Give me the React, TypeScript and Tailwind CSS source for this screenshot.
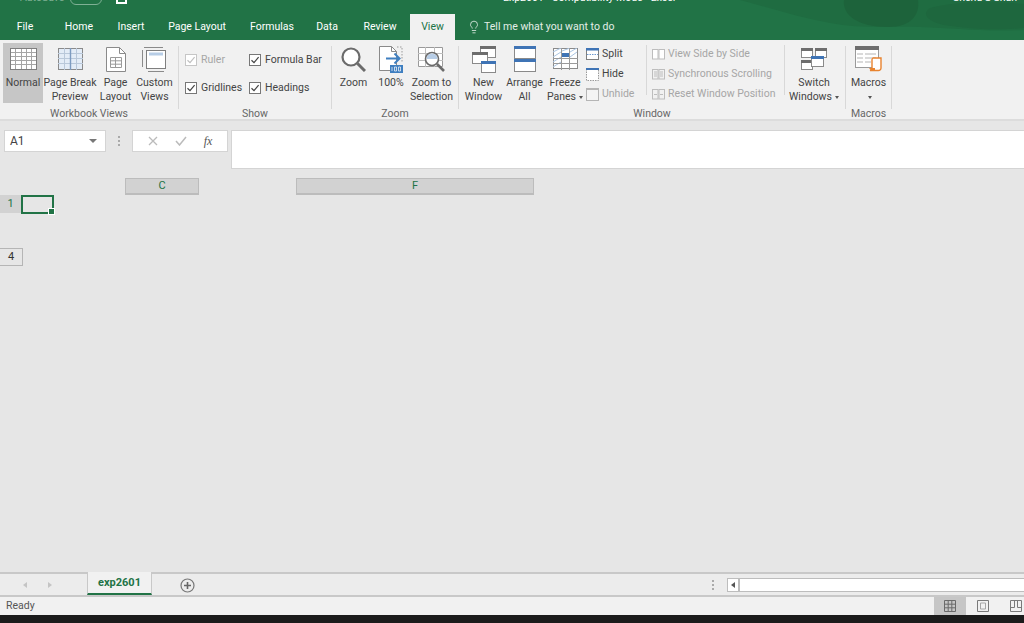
import { Lightbulb } from 'lucide-react';

const tabs = [
  { name: 'File', w: 'w-[50px]' },
  { name: 'Home', w: 'w-[58px]' },
  { name: 'Insert', w: 'w-[46px]' },
  { name: 'Page Layout', w: 'w-[86px]' },
  { name: 'Formulas', w: 'w-[64px]' },
  { name: 'Data', w: 'w-[46px]' },
  { name: 'Review', w: 'w-[60px]' },
];

function Sep() {
  return <div className="w-px h-[63px] mt-[3px] bg-[#d8d8d8] shrink-0" />;
}

function NormalIcon() {
  return (
    <svg width="27" height="22" viewBox="0 0 27 22" fill="none">
      <rect x="0.5" y="0.5" width="26" height="21" fill="#fff" />
      <path d="M0 4.5h27M0 8.5h27M0 12.5h27M0 16.5h27M5.5 0v22M11.5 0v22M16.5 0v22M21.5 0v22" stroke="#a5a5a5" />
      <rect x="0.5" y="0.5" width="26" height="21" stroke="#7f7f7f" />
    </svg>
  );
}

function PageBreakIcon() {
  return (
    <svg width="25" height="22" viewBox="0 0 25 22" fill="none">
      <rect x="0.5" y="0.5" width="24" height="21" fill="#e3ecf7" stroke="#8a8a8a" />
      <path d="M0 5.5h25M0 10.5h25M0 15.5h25M6.5 0v22M18.5 0v22" stroke="#b9c8da" />
      <path d="M12.5 0v22" stroke="#7d9bc0" strokeWidth="1.4" />
    </svg>
  );
}

function PageLayoutIcon() {
  return (
    <svg width="20" height="25" viewBox="0 0 20 25" fill="none">
      <path d="M.5.5h13l6 6v18H.5z" fill="#fff" stroke="#8a8a8a" />
      <path d="M13.5.5v6h6" stroke="#8a8a8a" />
      <path d="M4.5 10.5h11v10h-11zM4.5 13.8h11M4.5 17.2h11M9.5 10.5v10" stroke="#9a9a9a" />
    </svg>
  );
}

function CustomViewsIcon() {
  return (
    <svg width="25" height="25" viewBox="0 0 25 25" fill="none">
      <path d="M2 .5h19M.5 3v17M6 24.5h16" stroke="#8a8a8a" />
      <rect x="4.5" y="3.5" width="19" height="18" fill="#fff" stroke="#7f7f7f" />
      <rect x="7" y="5.5" width="14" height="3" fill="#b7cde6" />
    </svg>
  );
}

function ZoomIcon() {
  return (
    <svg width="25" height="25" viewBox="0 0 25 25" fill="none">
      <circle cx="10" cy="10" r="8.5" fill="#fff" stroke="#6b6b6b" strokeWidth="2.2" />
      <path d="M16.5 16.5 24 24" stroke="#6b6b6b" strokeWidth="3" />
    </svg>
  );
}

function HundredIcon() {
  return (
    <svg width="24" height="27" viewBox="0 0 24 27" fill="none">
      <path d="M.5.5h12l5 5v19H.5z" fill="#fff" stroke="#8a8a8a" />
      <path d="M12.5.5v5h5" stroke="#8a8a8a" />
      <path d="M18 1h5v15" stroke="#9a9a9a" strokeDasharray="1.5 1.5" />
      <path d="M7 12.5h13M15.5 7.5l5 5-5 5" stroke="#3f7fc0" strokeWidth="2" />
      <rect x="11" y="19" width="13" height="8" fill="#3f7fc0" />
      <path d="M13 21v4M15.5 21h2v4h-2zM19.5 21h2v4h-2z" stroke="#fff" strokeWidth=".7" />
    </svg>
  );
}

function ZoomSelectionIcon() {
  return (
    <svg width="27" height="25" viewBox="0 0 27 25" fill="none">
      <path d="M.5.5h24v19H.5z" fill="#fff" stroke="#9a9a9a" />
      <path d="M0 6.5h25M0 13.5h25M7.5 0v20M16.5 0v20" stroke="#bdbdbd" />
      <circle cx="14" cy="12" r="6.5" fill="#fff" stroke="#6b6b6b" strokeWidth="1.6" />
      <path d="M8.5 12a5.5 5.5 0 0 1 11 0z" fill="#b7cde6" />
      <path d="M19 17l7 7" stroke="#6b6b6b" strokeWidth="2.6" />
    </svg>
  );
}

function Win({ x, y, w, h, blue }: { x: number; y: number; w: number; h: number; blue?: boolean }) {
  return (
    <g>
      <rect x={x + 0.5} y={y + 0.5} width={w} height={h} fill="#fff" stroke="#8a8a8a" />
      <rect x={x} y={y} width={w + 1} height={3} fill={blue ? '#3f74b5' : '#6d6d6d'} />
    </g>
  );
}

function NewWindowIcon() {
  return (
    <svg width="24" height="27" viewBox="0 0 24 27" fill="none">
      <Win x={8} y={0} w={15} h={11} />
      <Win x={0} y={6} w={15} h={11} />
      <Win x={9} y={15} w={14} h={11} blue />
    </svg>
  );
}

function ArrangeIcon() {
  return (
    <svg width="22" height="26" viewBox="0 0 22 26" fill="none">
      <Win x={0} y={0} w={21} h={12} blue />
      <Win x={0} y={13} w={21} h={12} blue />
    </svg>
  );
}

function FreezeIcon() {
  return (
    <svg width="25" height="23" viewBox="0 0 25 23" fill="none">
      <rect x="0.5" y="0.5" width="24" height="20" fill="#fff" stroke="#8a8a8a" />
      <path d="M0 4l8-4M0 9l8-5M0 14l8-5M0 19l8-5M17 4l7-4M17 9l7-5M9 3l8-3" stroke="#a9c4e2" />
      <rect x="9" y="5" width="7" height="4" fill="#3f74b5" />
      <path d="M8.5 0v22M16.5 0v22M0 10.5h25M0 15.5h25" stroke="#9a9a9a" />
    </svg>
  );
}

function SplitIcon() {
  return (
    <svg width="13" height="13" viewBox="0 0 13 13" fill="none">
      <rect x=".5" y=".5" width="12" height="11" fill="#fff" stroke="#7f7f7f" />
      <rect width="13" height="2.5" fill="#3f74b5" />
      <path d="M1 6.5h11" stroke="#6f9bd0" strokeDasharray="1.5 1" />
    </svg>
  );
}

function HideIcon() {
  return (
    <svg width="13" height="13" viewBox="0 0 13 13" fill="none">
      <path d="M.5 1v11.5h12V1" fill="#fff" stroke="#9a9a9a" strokeDasharray="1.5 1" />
      <rect width="13" height="2" fill="#3f74b5" />
    </svg>
  );
}

function UnhideIcon() {
  return (
    <svg width="13" height="13" viewBox="0 0 13 13" fill="none">
      <rect x=".5" y=".5" width="12" height="12" fill="#f4f4f4" stroke="#b5b5b5" />
      <rect x=".5" y=".5" width="12" height="1.5" fill="#b5b5b5" />
    </svg>
  );
}

function SideBySideIcon({ kind }: { kind: number }) {
  return (
    <svg width="13" height="11" viewBox="0 0 13 11" fill="none" stroke="#bdbdbd">
      <rect x=".5" y=".5" width="5.5" height="9.5" fill={kind === 0 ? '#fff' : 'none'} />
      <rect x="7" y=".5" width="5.5" height="9.5" fill={kind === 0 ? '#fff' : 'none'} />
      {kind === 1 && <path d="M2 3h3M2 5h3M2 7h3M8 3h3M8 5h3M8 7h3" />}
      {kind === 2 && <path d="M2 5.5h3M8 5.5h3" />}
    </svg>
  );
}

function SwitchIcon() {
  return (
    <svg width="26" height="22" viewBox="0 0 26 22" fill="none">
      <Win x={0} y={0} w={11} h={9} />
      <Win x={14} y={0} w={11} h={9} />
      <Win x={0} y={12} w={11} h={9} />
      <Win x={10} y={8} w={12} h={10} blue />
    </svg>
  );
}

function MacrosIcon() {
  return (
    <svg width="28" height="26" viewBox="0 0 28 26" fill="none">
      <rect x=".5" y=".5" width="23" height="21" fill="#fff" stroke="#9a9a9a" />
      <rect width="24" height="4" fill="#6d6d6d" />
      <path d="M2 8h6M10 8h11M2 12h6M10 12h11M2 16h6M10 16h6" stroke="#b5b5b5" />
      <path d="M18 12h8v10a2.5 2.5 0 0 1-2.5 2.5H15a2.5 2.5 0 0 0 2-2.5V14a2 2 0 0 1 1-2z" fill="#fff" stroke="#e8832f" strokeWidth="1.4" />
      <path d="M14 22h6v2.5h-4z" fill="#e8832f" />
    </svg>
  );
}

function Caret() {
  return <span className="inline-block align-middle ml-[3px] w-0 h-0 border-x-[2.5px] border-x-transparent border-t-[3px] border-t-[#555]" />;
}

function BigButton({ icon, lines, w, active, caret }: { icon: React.ReactNode; lines: string[]; w: string; active?: boolean; caret?: boolean }) {
  return (
    <div className={`${w} h-[60px] shrink-0 flex flex-col items-center pt-[3px] ${active ? 'bg-[#c6c6c6]' : ''}`}>
      <div className="h-[30px] shrink-0 pb-[4px] flex items-center justify-center">{icon}</div>
      {lines.map((l, i) => (
        <div key={l} className="leading-[14px] whitespace-nowrap">
          {l}
          {caret && i === lines.length - 1 ? <Caret /> : null}
        </div>
      ))}
    </div>
  );
}

function CheckRow({ label, disabled }: { label: string; disabled?: boolean }) {
  return (
    <div className={`flex items-center gap-1 h-[14px] ${disabled ? 'text-[#a6a6a6]' : ''}`}>
      <span className={`w-3 h-3 border bg-white flex items-center justify-center ${disabled ? 'border-[#c6c6c6]' : 'border-[#777]'}`}>
        <svg width="10" height="10" viewBox="0 0 10 10" fill="none">
          <path d="M1.5 5.2 4 7.6 8.6 2.2" stroke={disabled ? '#c0c0c0' : '#444'} strokeWidth="1.2" />
        </svg>
      </span>
      <span className="whitespace-nowrap">{label}</span>
    </div>
  );
}

function Group({ label, w, children }: { label: string; w: string; children: React.ReactNode }) {
  return (
    <div className={`${w} shrink-0 h-[78px] flex flex-col`}>
      <div className="h-[63px] flex">{children}</div>
      <div className="text-center leading-[14px] text-[#666] mt-[2px]">{label}</div>
    </div>
  );
}

function SmallRow({ icon, label, disabled }: { icon: React.ReactNode; label: string; disabled?: boolean }) {
  return (
    <div className={`h-5 flex items-center gap-[3px] whitespace-nowrap ${disabled ? 'text-[#a6a6a6]' : ''}`}>
      {icon}
      <span>{label}</span>
    </div>
  );
}

export default function App() {
  return (
    <div className="w-[1024px] h-[623px] overflow-hidden flex flex-col bg-[#e6e6e6] text-[#444] text-[10.5px] font-['Roboto',sans-serif]">
      {/* title bar + tabs */}
      <div className="relative h-10 shrink-0 bg-[#217346] text-white overflow-hidden">
        <svg className="absolute right-0 top-0" width="284" height="40" viewBox="0 0 284 40">
          <path d="M0 0h284v30c-40 2-70-2-104-3-30-1-60 2-90-4C60 18 30 8 0 0z" fill="#1f6c41" />
          <path d="M104 0h74c2 14-6 27-30 27-30 0-46-12-44-27z" fill="#1d633b" />
          <path d="M190 8c30-8 70-6 94-4v24c-30 3-60 0-80-3-14-3-24-10-14-17z" fill="#1e673e" />
        </svg>
        <div className="relative h-[14px] overflow-hidden">
          <div className="absolute left-[20px] top-[-10px] whitespace-nowrap text-[#7fb094]">AutoSave</div>
          <div className="absolute left-[70px] top-[-7px] w-[32px] h-[12px] rounded-full border border-[#7fb094]" />
          <div className="absolute left-[116px] top-[-6px] w-[11px] h-[10px] border-2 border-white" />
          <div className="absolute left-[503px] top-[-10px] whitespace-nowrap">Exp2601 - Compatibility Mode - Excel</div>
          <div className="absolute left-[953px] top-[-10px] whitespace-nowrap">Sneha S Shah</div>
        </div>
        <div className="relative h-[26px] flex items-stretch">
          {tabs.map((t) => (
            <div key={t.name} className={`${t.w} flex items-center justify-center`}>{t.name}</div>
          ))}
          <div className="w-[45px] bg-[#f1f1f1] text-[#217346] flex items-center justify-center">View</div>
          <div className="ml-[12px] flex items-center gap-[3px] text-[#e3eee7]">
            <Lightbulb size={14} strokeWidth={1.4} />
            <span>Tell me what you want to do</span>
          </div>
        </div>
      </div>

      {/* ribbon */}
      <div className="h-[81px] shrink-0 bg-[#f1f1f1] border-b-2 border-[#dcdcdc] flex pt-[3px]">
        <Group label="Workbook Views" w="w-[178px]">
          <div className="flex pl-[3px] gap-px">
            <BigButton icon={<NormalIcon />} lines={['Normal']} w="w-10" active />
            <BigButton icon={<PageBreakIcon />} lines={['Page Break', 'Preview']} w="w-[52px]" />
            <BigButton icon={<PageLayoutIcon />} lines={['Page', 'Layout']} w="w-[37px]" />
            <BigButton icon={<CustomViewsIcon />} lines={['Custom', 'Views']} w="w-[39px]" />
          </div>
        </Group>
        <Sep />
        <Group label="Show" w="w-[152px]">
          <div className="pl-[6px] pt-[10px] grid grid-cols-[64px_auto] gap-y-[14px] h-fit">
            <CheckRow label="Ruler" disabled />
            <CheckRow label="Formula Bar" />
            <CheckRow label="Gridlines" />
            <CheckRow label="Headings" />
          </div>
        </Group>
        <Sep />
        <Group label="Zoom" w="w-[126px]">
          <div className="flex pl-[3px]">
            <BigButton icon={<ZoomIcon />} lines={['Zoom']} w="w-[37px]" />
            <BigButton icon={<HundredIcon />} lines={['100%']} w="w-[38px]" />
            <BigButton icon={<ZoomSelectionIcon />} lines={['Zoom to', 'Selection']} w="w-[43px]" />
          </div>
        </Group>
        <Sep />
        <Group label="Window" w="w-[386px]">
          <div className="flex pl-[4px]">
            <BigButton icon={<NewWindowIcon />} lines={['New', 'Window']} w="w-[41px]" />
            <BigButton icon={<ArrangeIcon />} lines={['Arrange', 'All']} w="w-[41px]" />
            <BigButton icon={<FreezeIcon />} lines={['Freeze', 'Panes']} w="w-[40px]" caret />
            <div className="w-[61px] shrink-0 pl-[1px] pt-[1px]">
              <SmallRow icon={<SplitIcon />} label="Split" />
              <SmallRow icon={<HideIcon />} label="Hide" />
              <SmallRow icon={<UnhideIcon />} label="Unhide" disabled />
            </div>
            <div className="w-px h-[50px] mt-[2px] bg-[#d8d8d8] shrink-0" />
            <div className="w-[137px] shrink-0 pl-[5px] pt-[1px]">
              <SmallRow icon={<SideBySideIcon kind={0} />} label="View Side by Side" disabled />
              <SmallRow icon={<SideBySideIcon kind={1} />} label="Synchronous Scrolling" disabled />
              <SmallRow icon={<SideBySideIcon kind={2} />} label="Reset Window Position" disabled />
            </div>
            <div className="w-px h-[50px] mt-[2px] bg-[#d8d8d8] shrink-0" />
            <BigButton icon={<SwitchIcon />} lines={['Switch', 'Windows']} w="w-[58px]" caret />
          </div>
        </Group>
        <Sep />
        <Group label="Macros" w="w-[45px]">
          <div className="flex">
            <div className="w-[45px] h-[60px] flex flex-col items-center pt-[3px]">
              <div className="h-[30px] shrink-0"><MacrosIcon /></div>
              <div className="leading-[14px]">Macros</div>
              <div className="leading-[14px]"><Caret /></div>
            </div>
          </div>
        </Group>
        <Sep />
      </div>

      {/* formula bar */}
      <div className="h-[49px] shrink-0 flex items-start pt-[9px] pl-1">
        <div className="w-[102px] h-[22px] bg-white border border-[#d4d4d4] flex items-center justify-between pl-[5px] pr-[8px] text-[12px]">
          <span>A1</span>
          <span className="w-0 h-0 border-x-[4px] border-x-transparent border-t-[4px] border-t-[#777]" />
        </div>
        <div className="w-[26px] h-[22px] flex items-center justify-center">
          <span className="w-[2px] h-[10px] border-l-2 border-dotted border-[#aaa]" />
        </div>
        <div className="w-[96px] h-[22px] bg-white border border-[#d4d4d4] flex items-center justify-around px-[6px]">
          <svg width="10" height="10" viewBox="0 0 10 10" fill="none"><path d="M1 1l8 8M9 1l-8 8" stroke="#bbb" strokeWidth="1.3" /></svg>
          <svg width="12" height="10" viewBox="0 0 12 10" fill="none"><path d="M1 5l3.5 4L11 1" stroke="#bbb" strokeWidth="1.5" /></svg>
          <span className="italic font-['Liberation_Serif',serif] text-[12px] text-[#555]">fx</span>
        </div>
        <div className="ml-[3px] flex-1 h-[39px] bg-white border border-[#d4d4d4] border-r-0" />
      </div>

      {/* sheet area: only a few headers are left visible */}
      <div className="flex-1 min-h-0 flex flex-col text-[11px]">
        <div className="h-[17px] mt-[8px] flex shrink-0">
          <div className="ml-[125px] w-[74px] h-[17px] bg-[#d2d2d2] border border-[#bcbcbc] border-b-2 flex items-center justify-center text-[#217346]">C</div>
          <div className="ml-[97px] w-[238px] h-[17px] bg-[#d2d2d2] border border-[#bcbcbc] border-b-2 flex items-center justify-center text-[#217346]">F</div>
        </div>
        <div className="h-[19px] flex items-stretch shrink-0">
          <div className="w-[21px] h-[18px] bg-[#d2d2d2] flex items-center justify-center text-[#217346]">1</div>
          <div className="relative w-[33px] h-[19px] border-2 border-[#217346]">
            <span className="absolute right-[-3px] bottom-[-3px] w-[5px] h-[5px] bg-[#217346] border border-white box-content" />
          </div>
        </div>
        <div className="mt-[34px] w-[23px] h-[18px] bg-[#e6e6e6] border border-[#b5b5b5] border-l-0 flex items-center justify-center text-[#333]">4</div>
      </div>

      {/* sheet tabs */}
      <div className="h-[25px] shrink-0 bg-[#ececec] border-y-2 border-[#c8c8c8] flex items-stretch">
        <div className="w-[87px] flex items-center pl-[23px] gap-[21px]">
          <span className="w-0 h-0 border-y-[3.5px] border-y-transparent border-r-[4px] border-r-[#c4c4c4]" />
          <span className="w-0 h-0 border-y-[3.5px] border-y-transparent border-l-[4px] border-l-[#c4c4c4]" />
        </div>
        <div className="w-[65px] -mt-[2px] pt-[2px] bg-[#f1f1f1] border-x border-[#c8c8c8] border-b-2 border-b-[#217346] flex items-center justify-center font-bold text-[11px] text-[#217346]">exp2601</div>
        <div className="ml-[28px] pt-px flex items-center">
          <svg width="15" height="15" viewBox="0 0 15 15" fill="none"><circle cx="7.5" cy="7.5" r="6.5" stroke="#777" strokeWidth="1.2" /><path d="M7.5 4v7M4 7.5h7" stroke="#666" strokeWidth="1.6" /></svg>
        </div>
        <div className="ml-auto w-[312px] flex items-center">
          <span className="w-[2px] h-[10px] border-l-2 border-dotted border-[#aaa]" />
          <div className="ml-[13px] flex-1 h-[14px] bg-white border border-[#bdbdbd] border-r-0 flex">
            <div className="w-[12px] border-r-2 border-[#bdbdbd] flex items-center justify-center">
              <span className="w-0 h-0 border-y-[3.5px] border-y-transparent border-r-[4px] border-r-[#555]" />
            </div>
          </div>
        </div>
      </div>

      {/* status bar */}
      <div className="h-[18px] shrink-0 bg-[#f1f1f1] flex items-stretch">
        <div className="pl-[6px] flex items-center text-[#555]">Ready</div>
        <div className="ml-auto flex items-stretch w-[90px]">
          <div className="w-[32px] bg-[#c6c6c6] flex items-center justify-center">
            <svg width="12" height="12" viewBox="0 0 12 12" fill="none" stroke="#6a6a6a"><path d="M.5.5h11v11H.5zM.5 4.2h11M.5 7.8h11M4.2.5v11M7.8.5v11" /></svg>
          </div>
          <div className="w-[33px] flex items-center justify-center">
            <svg width="12" height="12" viewBox="0 0 12 12" fill="none" stroke="#7a7a7a"><path d="M.5.5h11v11H.5z" /><path d="M3.5 3h5v6h-5z" stroke="#a5a5a5" /></svg>
          </div>
          <div className="flex-1 flex items-center pl-[11px]">
            <svg width="12" height="12" viewBox="0 0 12 12" fill="none" stroke="#7a7a7a"><path d="M.5.5h11v11H.5zM.5 7.5h4V.5M7.5.5v7h4" /></svg>
          </div>
        </div>
      </div>

      <div className="h-2 shrink-0 bg-[#1b1b1b]" />
    </div>
  );
}
